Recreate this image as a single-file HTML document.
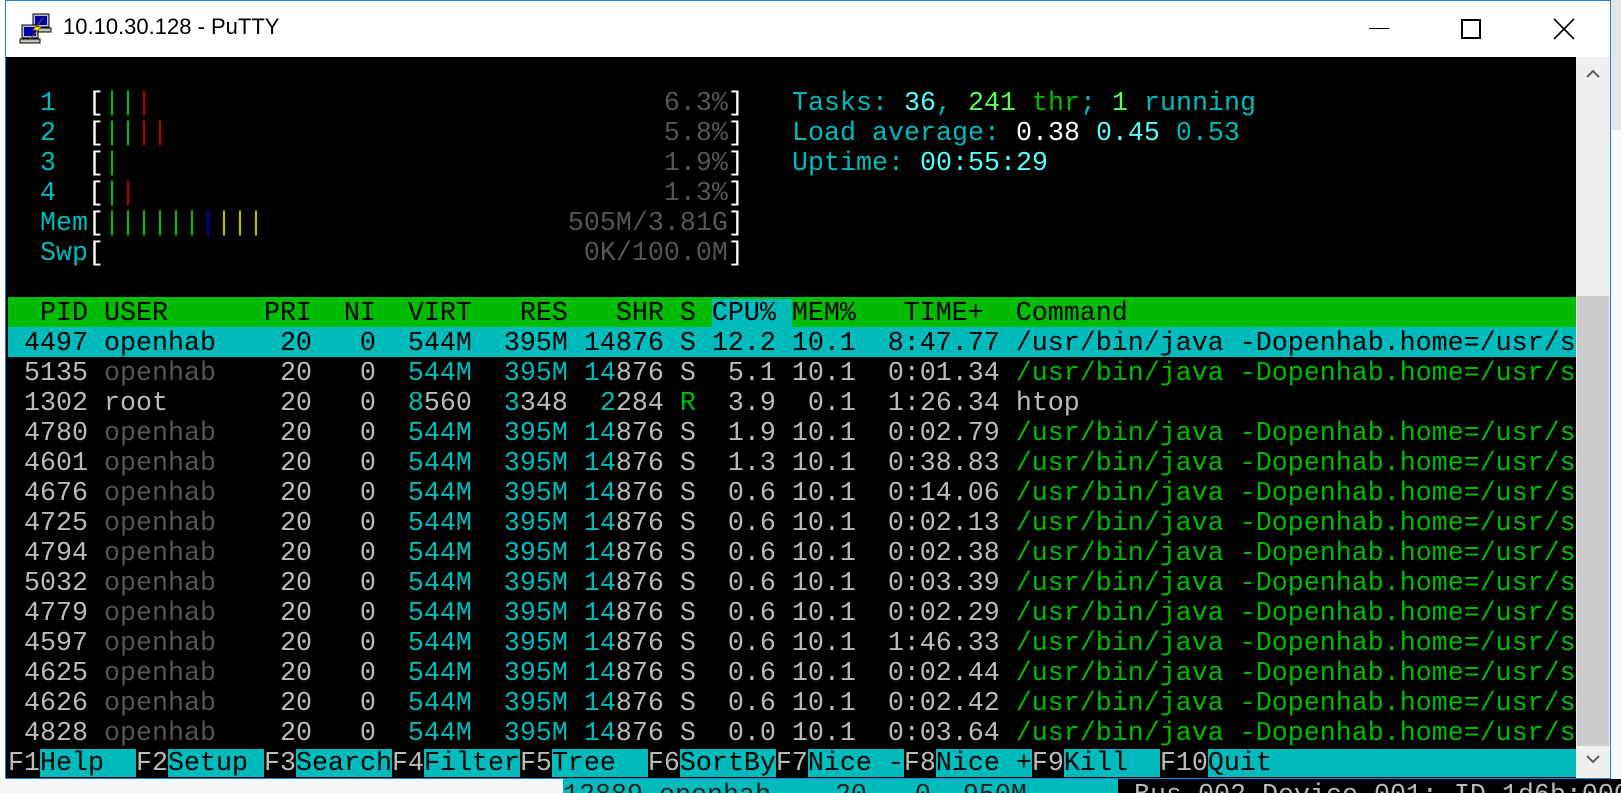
<!DOCTYPE html>
<html><head><meta charset="utf-8"><style>
*{margin:0;padding:0;box-sizing:border-box}
html,body{width:1621px;height:793px;overflow:hidden;background:#f0f0f0;position:relative}
.mono{font-family:"Liberation Mono","DejaVu Sans Mono",monospace;font-size:26.667px;line-height:30px;white-space:pre}
#win{position:absolute;left:5px;top:0;width:1606px;height:779px;border:1px solid #1883d7;background:#fff}
#title{position:absolute;left:57px;top:13px;font-family:"Liberation Sans",sans-serif;font-size:22px;color:#000}
#term{position:absolute;left:6px;top:57px;width:1570px;height:721px;background:#000;overflow:hidden}
.row{position:absolute;left:2px;width:1568px;height:30px;overflow:hidden;padding-top:3px;line-height:28px}
#sb{position:absolute;left:1576px;top:57px;width:34px;height:721px;background:#f0f0f0}
.g{color:#bbbbbb}.d{color:#555555}.c{color:#00bbbb}.gr{color:#00bb00}.r{color:#bb0000}
.w{color:#ffffff}.bc{color:#55ffff}.bg{color:#55ff55}.b{color:#0000bb}.y{color:#bbbb00}.k{color:#000}
.cy{background:#00bbbb;color:#000}.gb{background:#00bb00;color:#000}
</style></head><body>
<div style="position:absolute;left:0;top:0;width:5px;height:793px;background:#fff"></div>
<div style="position:absolute;left:0;top:779px;width:563px;height:14px;background:#f7f7f7"></div>
<div class="mono" style="position:absolute;left:563px;top:779px;width:555px;height:14px;background:#00bbbb;overflow:hidden"><div style="position:relative;top:2px;color:#222">12889 openhab    20   0  950M</div></div>
<div class="mono" style="position:absolute;left:1118px;top:779px;width:503px;height:14px;background:#000;overflow:hidden"><div style="position:relative;top:2px;color:#bbb"> Bus 002 Device 001: ID 1d6b:0002</div></div>
<div style="position:absolute;left:1611px;top:0;width:10px;height:779px;background:#fafafa"></div>
<div style="position:absolute;left:1611px;top:0;width:10px;height:130px;background:#e6e6e6"></div>

<div id="win">
 <svg style="position:absolute;left:13px;top:11px" width="36" height="34" viewBox="0 0 36 34">
  <rect x="14" y="2" width="16" height="13" fill="#c0c0c0" stroke="#000"/><rect x="16" y="4" width="12" height="9" fill="#0000b0"/>
  <rect x="12" y="16" width="20" height="4" fill="#c0c0c0" stroke="#000"/>
  <rect x="3" y="13" width="16" height="13" fill="#c0c0c0" stroke="#000"/><rect x="5" y="15" width="12" height="9" fill="#0000b0"/>
  <rect x="1" y="27" width="20" height="4" fill="#c0c0c0" stroke="#000"/>
  <path d="M24 6 L14 18 L19 18 L10 28 L22 15 L17 15 Z" fill="#ffff00" stroke="#806000" stroke-width="0.8"/>
 </svg>
 <div id="title">10.10.30.128 - PuTTY</div>
 <div style="position:absolute;left:1363px;top:27px;width:20px;height:1px;background:#000"></div>
 <div style="position:absolute;left:1455px;top:18px;width:20px;height:20px;border:2px solid #000"></div>
 <svg style="position:absolute;left:1547px;top:17px" width="22" height="22" viewBox="0 0 22 22"><path d="M1 1 L21 21 M21 1 L1 21" stroke="#000" stroke-width="1.6"/></svg>
</div>

<div id="term" class="mono">
<div class="row" style="top:30px"><span class="c">  1  </span><span class="w">[</span><span class="gr">||</span><span class="r">|</span>                                <span class="d">6.3%</span><span class="w">]</span></div>
<div class="row" style="top:60px"><span class="c">  2  </span><span class="w">[</span><span class="gr">||</span><span class="r">||</span>                               <span class="d">5.8%</span><span class="w">]</span></div>
<div class="row" style="top:90px"><span class="c">  3  </span><span class="w">[</span><span class="gr">|</span>                                  <span class="d">1.9%</span><span class="w">]</span></div>
<div class="row" style="top:120px"><span class="c">  4  </span><span class="w">[</span><span class="gr">|</span><span class="r">|</span>                                 <span class="d">1.3%</span><span class="w">]</span></div>
<div class="row" style="top:150px"><span class="c">  Mem</span><span class="w">[</span><span class="gr">||||||</span><span class="b">|</span><span class="y">|||</span>                   <span class="d">505M/3.81G</span><span class="w">]</span></div>
<div class="row" style="top:180px"><span class="c">  Swp</span><span class="w">[</span>                              <span class="d">0K/100.0M</span><span class="w">]</span></div>
<div class="row" style="top:30px;left:786px;width:782px"><span class="c">Tasks: </span><span class="bc">36</span><span class="c">, </span><span class="bg">241</span><span class="gr"> thr</span><span class="c">; </span><span class="bg">1</span><span class="c"> running</span></div>
<div class="row" style="top:60px;left:786px;width:782px"><span class="c">Load average: </span><span class="w">0.38 </span><span class="bc">0.45 </span><span class="c">0.53</span></div>
<div class="row" style="top:90px;left:786px;width:782px"><span class="c">Uptime: </span><span class="bc">00:55:29</span></div>

<div class="row gb" style="top:240px">  PID USER      PRI  NI  VIRT   RES   SHR S <span class="cy">CPU% </span>MEM%   TIME+  Command                                   </div>
<div class="row cy" style="top:270px"> 4497 openhab    20   0  544M  395M 14876 S 12.2 10.1  8:47.77 /usr/bin/java -Dopenhab.home=/usr/s</div>
<div class="row" style="top:300px"><span class="g"> 5135 </span><span class="d">openhab  </span><span class="g">  20   0 </span><span class="c"> 544M  395M 14</span><span class="g">876 S  5.1 10.1  0:01.34 </span><span class="gr">/usr/bin/java -Dopenhab.home=/usr/s</span></div>
<div class="row" style="top:330px"><span class="g"> 1302 root       20   0 </span><span class="c"> 8</span><span class="g">560  </span><span class="c">3</span><span class="g">348  </span><span class="c">2</span><span class="g">284 </span><span class="gr">R</span><span class="g">  3.9  0.1  1:26.34 htop</span></div>
<div class="row" style="top:360px"><span class="g"> 4780 </span><span class="d">openhab  </span><span class="g">  20   0 </span><span class="c"> 544M  395M 14</span><span class="g">876 S  1.9 10.1  0:02.79 </span><span class="gr">/usr/bin/java -Dopenhab.home=/usr/s</span></div>
<div class="row" style="top:390px"><span class="g"> 4601 </span><span class="d">openhab  </span><span class="g">  20   0 </span><span class="c"> 544M  395M 14</span><span class="g">876 S  1.3 10.1  0:38.83 </span><span class="gr">/usr/bin/java -Dopenhab.home=/usr/s</span></div>
<div class="row" style="top:420px"><span class="g"> 4676 </span><span class="d">openhab  </span><span class="g">  20   0 </span><span class="c"> 544M  395M 14</span><span class="g">876 S  0.6 10.1  0:14.06 </span><span class="gr">/usr/bin/java -Dopenhab.home=/usr/s</span></div>
<div class="row" style="top:450px"><span class="g"> 4725 </span><span class="d">openhab  </span><span class="g">  20   0 </span><span class="c"> 544M  395M 14</span><span class="g">876 S  0.6 10.1  0:02.13 </span><span class="gr">/usr/bin/java -Dopenhab.home=/usr/s</span></div>
<div class="row" style="top:480px"><span class="g"> 4794 </span><span class="d">openhab  </span><span class="g">  20   0 </span><span class="c"> 544M  395M 14</span><span class="g">876 S  0.6 10.1  0:02.38 </span><span class="gr">/usr/bin/java -Dopenhab.home=/usr/s</span></div>
<div class="row" style="top:510px"><span class="g"> 5032 </span><span class="d">openhab  </span><span class="g">  20   0 </span><span class="c"> 544M  395M 14</span><span class="g">876 S  0.6 10.1  0:03.39 </span><span class="gr">/usr/bin/java -Dopenhab.home=/usr/s</span></div>
<div class="row" style="top:540px"><span class="g"> 4779 </span><span class="d">openhab  </span><span class="g">  20   0 </span><span class="c"> 544M  395M 14</span><span class="g">876 S  0.6 10.1  0:02.29 </span><span class="gr">/usr/bin/java -Dopenhab.home=/usr/s</span></div>
<div class="row" style="top:570px"><span class="g"> 4597 </span><span class="d">openhab  </span><span class="g">  20   0 </span><span class="c"> 544M  395M 14</span><span class="g">876 S  0.6 10.1  1:46.33 </span><span class="gr">/usr/bin/java -Dopenhab.home=/usr/s</span></div>
<div class="row" style="top:600px"><span class="g"> 4625 </span><span class="d">openhab  </span><span class="g">  20   0 </span><span class="c"> 544M  395M 14</span><span class="g">876 S  0.6 10.1  0:02.44 </span><span class="gr">/usr/bin/java -Dopenhab.home=/usr/s</span></div>
<div class="row" style="top:630px"><span class="g"> 4626 </span><span class="d">openhab  </span><span class="g">  20   0 </span><span class="c"> 544M  395M 14</span><span class="g">876 S  0.6 10.1  0:02.42 </span><span class="gr">/usr/bin/java -Dopenhab.home=/usr/s</span></div>
<div class="row" style="top:660px"><span class="g"> 4828 </span><span class="d">openhab  </span><span class="g">  20   0 </span><span class="c"> 544M  395M 14</span><span class="g">876 S  0.0 10.1  0:03.64 </span><span class="gr">/usr/bin/java -Dopenhab.home=/usr/s</span></div>
<div class="row" style="top:690px"><span class="g">F1</span><span class="cy">Help  </span><span class="g">F2</span><span class="cy">Setup </span><span class="g">F3</span><span class="cy">Search</span><span class="g">F4</span><span class="cy">Filter</span><span class="g">F5</span><span class="cy">Tree  </span><span class="g">F6</span><span class="cy">SortBy</span><span class="g">F7</span><span class="cy">Nice -</span><span class="g">F8</span><span class="cy">Nice +</span><span class="g">F9</span><span class="cy">Kill  </span><span class="g">F10</span><span class="cy">Quit                       </span></div>
</div>

<div id="sb">
 <svg style="position:absolute;left:10px;top:12px" width="14" height="10" viewBox="0 0 14 10"><path d="M1 8 L7 2 L13 8" stroke="#606060" stroke-width="2" fill="none"/></svg>
 <div style="position:absolute;left:1px;top:239px;width:32px;height:450px;background:#cdcdcd"></div>
 <svg style="position:absolute;left:10px;top:697px" width="14" height="10" viewBox="0 0 14 10"><path d="M1 2 L7 8 L13 2" stroke="#606060" stroke-width="2" fill="none"/></svg>
</div>
</body></html>
